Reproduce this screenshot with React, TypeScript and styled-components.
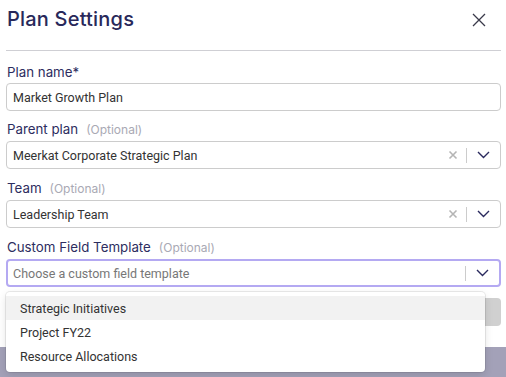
import React from 'react'
import styled, {createGlobalStyle} from 'styled-components'

const GlobalStyle = createGlobalStyle`
  html, body {
    margin: 0;
    padding: 0;
    background: #a3a1b8;
  }
  * {
    box-sizing: border-box;
  }
`

const Page = styled.div`
  width: 506px;
  height: 377px;
  overflow: hidden;
  background: #a3a1b8;
  font-family: 'Roboto', 'Noto Sans', sans-serif;
`

const Modal = styled.div`
  width: 506px;
  height: 347px;
  background: #ffffff;
  padding: 0 5px 0 6px;
  display: flex;
  flex-direction: column;
`

const Header = styled.div`
  height: 51px;
  display: flex;
  align-items: flex-start;
  justify-content: space-between;
  padding: 7px 14px 0 1px;
  border-bottom: 1px solid #cfcfd4;
`

const Title = styled.h1`
  margin: 0;
  font-family: 'Inter', 'Lato', sans-serif;
  font-size: 20px;
  line-height: 24px;
  font-weight: 500;
  color: #28285a;
  letter-spacing: 0.2px;
`

const CloseButton = styled.button`
  border: 0;
  background: none;
  padding: 0;
  margin-top: 5px;
  width: 16px;
  height: 16px;
  cursor: pointer;
  color: #3a3a4a;
`

const Form = styled.div`
  display: flex;
  flex-direction: column;
  padding-top: 13px;
`

const Field = styled.div`
  position: relative;
  display: flex;
  flex-direction: column;
  margin-bottom: 11px;

  &:first-child {
    margin-bottom: 10px;
  }
`

const Label = styled.label`
  font-family: 'Inter', 'Lato', sans-serif;
  font-size: 13.3px;
  font-weight: 400;
  color: #2d2d60;
  line-height: 16px;
  margin-bottom: 3px;
  padding-left: 1px;
`

const Optional = styled.span`
  color: #a9a9b4;
  font-weight: 400;
  font-size: 12px;
  margin-left: 8px;
`

const Box = styled.div<{$focused?: boolean}>`
  height: 28px;
  border: ${(p) => (p.$focused ? '2px solid #b4a9f2' : '1px solid #cccccc')};
  border-radius: 4px;
  display: flex;
  align-items: center;
  padding-left: ${(p) => (p.$focused ? '5px' : '6px')};
  background: #fff;
`

const Value = styled.div<{$placeholder?: boolean}>`
  flex: 1;
  font-size: 12.5px;
  color: ${(p) => (p.$placeholder ? '#777777' : '#333333')};
  white-space: nowrap;
`

const Indicators = styled.div`
  display: flex;
  align-items: center;
  height: 100%;
`

const ClearIcon = styled.div`
  width: 26px;
  display: flex;
  justify-content: center;
  color: #b5b5b5;
`

const Separator = styled.div`
  width: 1px;
  height: 15px;
  background: #cccccc;
`

const Chevron = styled.div`
  width: 33px;
  display: flex;
  justify-content: center;
  color: #2a2a5e;
`

const SaveRow = styled.div`
  display: flex;
  justify-content: flex-end;
`

const SaveButton = styled.div`
  width: 120px;
  height: 28px;
  border-radius: 4px;
  background: #d0d0d0;
`

const Menu = styled.div`
  position: absolute;
  top: 53px;
  left: 0;
  width: 479px;
  background: #fff;
  border-radius: 4px;
  box-shadow: 0 0 0 1px rgba(0, 0, 0, 0.08), 0 3px 8px rgba(0, 0, 0, 0.12);
  padding: 4px 0 4px;
  z-index: 10;
`

const Option = styled.div<{$active?: boolean}>`
  height: 24px;
  display: flex;
  align-items: center;
  padding-left: 14px;
  font-size: 12.5px;
  color: #333333;
  background: ${(p) => (p.$active ? '#f2f2f2' : 'transparent')};
`

const XSmall = () => (
  <svg width="10" height="10" viewBox="0 0 10 10">
    <path d="M1.5 1.5 L8.5 8.5 M8.5 1.5 L1.5 8.5" stroke="currentColor" strokeWidth="1.6" />
  </svg>
)

const Down = () => (
  <svg width="13" height="8" viewBox="0 0 13 8">
    <path d="M1 1 L6.5 6.5 L12 1" stroke="currentColor" strokeWidth="1.4" fill="none" />
  </svg>
)

type SelectProps = {
  value?: string
  placeholder?: string
  clearable?: boolean
  focused?: boolean
}

function Select({value, placeholder, clearable, focused}: SelectProps) {
  return (
    <Box $focused={focused}>
      <Value $placeholder={!value}>{value || placeholder}</Value>
      <Indicators>
        {clearable && (
          <ClearIcon>
            <XSmall />
          </ClearIcon>
        )}
        <Separator />
        <Chevron>
          <Down />
        </Chevron>
      </Indicators>
    </Box>
  )
}

const templates = ['Strategic Initiatives', 'Project FY22', 'Resource Allocations']

export default function App() {
  return (
    <>
      <GlobalStyle />
      <Page>
        <Modal>
          <Header>
            <Title>Plan Settings</Title>
            <CloseButton aria-label="Close">
              <svg width="16" height="16" viewBox="0 0 16 16">
                <path d="M2 2 L14 14 M14 2 L2 14" stroke="currentColor" strokeWidth="1.3" />
              </svg>
            </CloseButton>
          </Header>
          <Form>
            <Field>
              <Label>Plan name*</Label>
              <Box>
                <Value>Market Growth Plan</Value>
              </Box>
            </Field>
            <Field>
              <Label>
                Parent plan<Optional>(Optional)</Optional>
              </Label>
              <Select value="Meerkat Corporate Strategic Plan" clearable />
            </Field>
            <Field>
              <Label>
                Team<Optional>(Optional)</Optional>
              </Label>
              <Select value="Leadership Team" clearable />
            </Field>
            <Field>
              <Label>
                Custom Field Template<Optional>(Optional)</Optional>
              </Label>
              <Select placeholder="Choose a custom field template" focused />
              <Menu>
                {templates.map((t, i) => (
                  <Option key={t} $active={i === 0}>
                    {t}
                  </Option>
                ))}
              </Menu>
            </Field>
            <SaveRow>
              <SaveButton />
            </SaveRow>
          </Form>
        </Modal>
      </Page>
    </>
  )
}
